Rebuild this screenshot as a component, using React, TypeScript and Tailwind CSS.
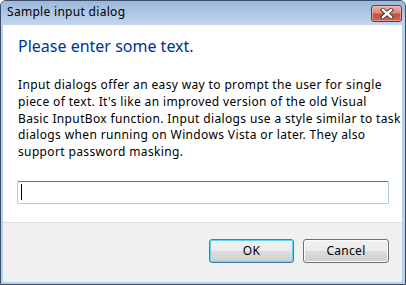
import React from "react";

const lines = [
  "Input dialogs offer an easy way to prompt the user for single",
  "piece of text. It's like an improved version of the old Visual",
  "Basic InputBox function. Input dialogs use a style similar to task",
  "dialogs when running on Windows Vista or later. They also",
  "support password masking.",
];

function CloseButton() {
  return (
    <div className="ml-auto mr-[3px] mt-[4px] w-[31px] h-[17px] rounded-[3px] border border-[#6b3a36] bg-[linear-gradient(to_bottom,#e9b0a5_0%,#d98a7b_45%,#c4513f_55%,#c96a59_100%)] flex items-center justify-center shadow-[inset_0_0_0_1px_rgba(255,220,210,0.45)]">
      <svg width="14" height="11" viewBox="0 0 14 11">
        <path d="M3 2 L11 9 M11 2 L3 9" stroke="#4a2a28" strokeWidth="4.2" strokeLinecap="square" fill="none" />
        <path d="M3 2 L11 9 M11 2 L3 9" stroke="#ffffff" strokeWidth="2.4" strokeLinecap="square" fill="none" />
      </svg>
    </div>
  );
}

export default function App() {
  return (
    <div className="w-[406px] h-[285px] flex flex-col bg-[#b8d0ea] border border-[#3d4f6b] rounded-t-[6px] overflow-hidden font-['Noto_Sans',sans-serif]">
      <div className="h-[24px] flex items-start bg-[linear-gradient(to_bottom,#9cb8da,#c2d6ec)]">
        <span className="ml-[6px] mt-[3px] text-[12px] leading-[16px] tracking-[0.3px] text-black whitespace-nowrap">
          Sample input dialog
        </span>
        <CloseButton />
      </div>
      <div className="flex-1 flex flex-col ml-[2px] mr-[3px] mb-[2px]">
        <div className="h-[197px] bg-white pl-[14px] pr-[13px] pt-[11px] flex flex-col">
          <div className="text-[16px] leading-[21px] text-[#003399] whitespace-nowrap pl-[1px]">
            Please enter some text.
          </div>
          <div className="mt-[20px] text-[12px] leading-[16.75px] tracking-[0.36px] text-black pl-[1px]">
            {lines.map((l, i) => (
              <div key={i} className="whitespace-nowrap">
                {l}
              </div>
            ))}
          </div>
          <div className="mt-[20px] h-[23px] w-full border border-[#a9cbe4] border-t-[#3d7bad] rounded-[2px] bg-white flex items-center pl-[3px]">
            <div className="w-[1px] h-[16px] bg-black" />
          </div>
        </div>
        <div className="flex-1 bg-[#f0f0f0] border-t border-[#dfdfdf] flex justify-end items-start pt-[16px] pr-[13px] gap-[9px]">
          <button className="w-[85px] h-[24px] rounded-[3px] border border-[#3c7fb1] shadow-[inset_0_0_0_1px_#62d2f6] bg-[linear-gradient(to_bottom,#f2f2f2_0%,#ebebeb_50%,#dddddd_50%,#cfcfcf_100%)] text-[12px] leading-[16px] tracking-[0.3px] text-black flex items-center justify-center">
            OK
          </button>
          <button className="w-[86px] h-[24px] rounded-[3px] border border-[#707070] shadow-[inset_0_0_0_1px_#fafafa] bg-[linear-gradient(to_bottom,#f2f2f2_0%,#ebebeb_50%,#dddddd_50%,#cfcfcf_100%)] text-[12px] leading-[16px] tracking-[0.3px] text-black flex items-center justify-center">
            Cancel
          </button>
        </div>
      </div>
    </div>
  );
}
